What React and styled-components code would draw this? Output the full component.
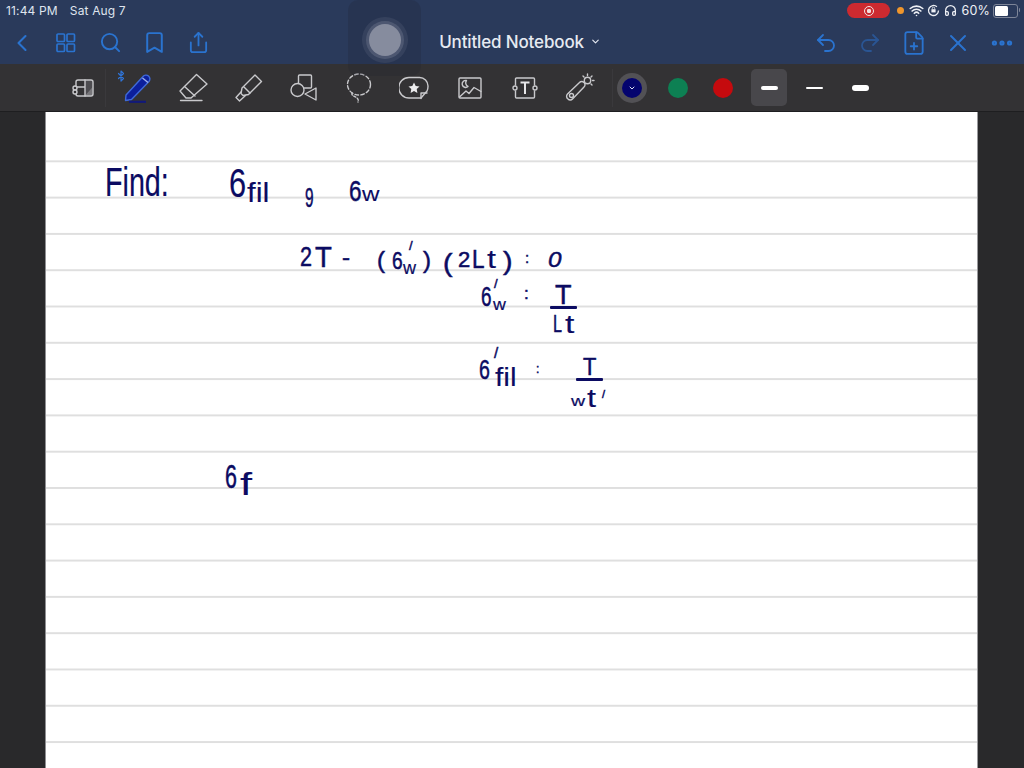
import React from "react";
import styled, { createGlobalStyle } from "styled-components";
import { ChevronLeft, Search, Bookmark, Share, Undo2, Redo2, FilePlus, X, Ellipsis, Wifi, Headphones, ChevronDown, Bluetooth } from "lucide-react";

const Global = createGlobalStyle`
  html, body { margin: 0; padding: 0; background: #29292b; }
  body { font-family: "Liberation Sans", Arial, sans-serif; }
  #root { width: 1024px; height: 768px; overflow: hidden; }
`;

const Screen = styled.div`
  position: relative;
  width: 1024px;
  height: 768px;
  display: flex;
  flex-direction: column;
  overflow: hidden;
  background: #29292b;
`;
const Header = styled.header`
  background: #2a3a5b;
  height: 64px;
  flex: none;
`;
const StatusBar = styled.div`
  height: 21px;
  padding: 0 3px 0 6px;
  display: flex;
  align-items: center;
  justify-content: space-between;
  color: #dfe4ee;
  font-size: 12px;
  font-family: "Inter", "Liberation Sans", sans-serif;
`;
const StatusLeft = styled.div`
  display: flex;
  gap: 12px;
  letter-spacing: 0.15px;
`;
const StatusRight = styled.div`
  display: flex;
  align-items: center;
  height: 100%;
  color: #eef0f5;
`;
const RecordPill = styled.div`
  width: 43px;
  height: 15px;
  border-radius: 8px;
  background: #cd2a30;
  display: flex;
  align-items: center;
  justify-content: center;
  margin-right: 6.5px;
`;
const RecordDot = styled.div`
  width: 10px;
  height: 10px;
  border-radius: 50%;
  box-sizing: border-box;
  background: radial-gradient(circle, #f6dcdc 0 35%, #cd2a30 42%);
  border: 1.5px solid #f3e4e4;
`;
const OrangeDot = styled.div`
  width: 7px;
  height: 7px;
  border-radius: 50%;
  background: #f0962c;
  margin-right: 4.5px;
`;
const StatusIcon = styled.div`
  width: 17px;
  display: flex;
  justify-content: center;
  align-items: center;
`;
const Percent = styled.span`
  margin-left: 2px;
  font-size: 12.5px;
  letter-spacing: 0.2px;
`;
const Battery = styled.div`
  position: relative;
  width: 21px;
  height: 10px;
  margin: 0 3px 0 3px;
  border: 1px solid #7d8598;
  border-radius: 3px;
  padding: 1px;
  display: flex;
  &::after {
    content: "";
    position: absolute;
    right: -3px;
    top: 3px;
    width: 1.5px;
    height: 4px;
    background: #7d8598;
    border-radius: 0 1px 1px 0;
  }
`;
const BatteryFill = styled.div`
  height: 100%;
  background: #fff;
  border-radius: 1.5px;
`;
const NavBar = styled.nav`
  height: 43px;
  display: flex;
  align-items: center;
  justify-content: space-between;
  color: #2a73cf;
`;
const NavGroup = styled.div`
  display: flex;
  width: 220px;
`;
const NavButton = styled.div`
  width: 44px;
  height: 43px;
  display: flex;
  align-items: center;
  justify-content: center;
  color: ${p => p.$dim ? "#2a5593" : "#2a73cf"};
`;
const Title = styled.div`
  margin: -2px 0 0 16px;
  display: flex;
  align-items: center;
  gap: 6px;
  color: #e6eaf2;
  font-size: 17px;
  font-family: "Inter", "Liberation Sans", sans-serif;
  font-weight: 500;
  letter-spacing: -0.15px;
`;
const Toolbar = styled.div`
  height: 47px;
  flex: none;
  display: flex;
  align-items: center;
  background: #333234;
  padding-left: 71px;
  border-bottom: 1px solid #1e1e20;
`;
const LayerSlot = styled.div`
  width: 24px;
  display: flex;
  justify-content: center;
`;
const Divider = styled.div`
  width: 1px;
  height: 38px;
  background: #3a393c;
  margin-left: ${p => p.$ml}px;
  margin-right: ${p => p.$mr}px;
`;
const Tool = styled.div`
  position: relative;
  width: 55.25px;
  height: 46px;
  flex: none;
  display: flex;
  align-items: center;
  justify-content: center;
`;
const BluetoothMark = styled.div`
  position: absolute;
  left: 4px;
  top: 5px;
  color: #2f74d8;
  display: flex;
`;
const ColorRow = styled.div`
  display: flex;
  gap: 15.5px;
  align-items: center;
`;
const Swatch = styled.div`
  width: 30px;
  height: 30px;
  border-radius: 50%;
  display: flex;
  align-items: center;
  justify-content: center;
  background: ${p => p.$ring ? "#525155" : "transparent"};
`;
const SwatchDot = styled.div`
  width: 20px;
  height: 20px;
  border-radius: 50%;
  background: ${p => p.$c};
  display: flex;
  align-items: center;
  justify-content: center;
  color: #dfe2f5;
`;
const WidthRow = styled.div`
  display: flex;
  gap: 9.5px;
  margin-left: 13px;
`;
const WidthBtn = styled.div`
  width: 36px;
  height: 37px;
  border-radius: 5px;
  display: flex;
  align-items: center;
  justify-content: center;
  background: ${p => p.$on ? "#48474b" : "transparent"};
`;
const WidthBar = styled.div`
  width: 17px;
  height: ${p => p.$h}px;
  border-radius: 3px;
  background: #fff;
`;
const Main = styled.main`
  flex: 1;
  padding: 0 47px 0 46px;
  display: flex;
`;
const Page = styled.div`
  position: relative;
  flex: 1;
  background-color: #fff;
  background-image:
    linear-gradient(#fff, #fff),
    linear-gradient(to bottom, transparent calc(100% - 2px), #dfdfdf calc(100% - 2px));
  background-size: 100% 40px, 100% 36.3px;
  background-position: 0 0, 0 14px;
  background-repeat: no-repeat, repeat;
  box-shadow: -1px 0 0 #8f8f92, 1px 0 0 #9a9a9d;
`;
const Ink = styled.span`
  position: absolute;
  left: ${p => p.$x - 46}px;
  top: ${p => p.$b - 112 - p.$s * 0.8465}px;
  font-size: ${p => p.$s}px;
  line-height: 1;
  color: #0b0b62;
  font-family: "Liberation Sans", Arial, sans-serif;
  font-style: ${p => p.$i ? "italic" : "normal"};
  -webkit-text-stroke: ${p => p.$w ?? 0.5}px #0b0b62;
  transform: scaleX(${p => p.$sx || 1});
  transform-origin: 0 0;
  white-space: pre;
`;
const FractionBar = styled.div`
  position: absolute;
  left: ${p => p.$x - 46}px;
  top: ${p => p.$y - 112}px;
  width: ${p => p.$w}px;
  height: 2.5px;
  background: #0b0b62;
  border-radius: 1px;
`;
const Assistive = styled.div`
  position: absolute;
  left: 348px;
  top: 0;
  width: 73px;
  height: 76px;
  border-radius: 10px;
  background: rgba(28, 30, 44, 0.2);
  display: flex;
  align-items: center;
  justify-content: center;
`;
const TouchOuter = styled.div`
  width: 46px;
  height: 46px;
  border-radius: 50%;
  background: rgba(120, 128, 150, 0.18);
  display: flex;
  align-items: center;
  justify-content: center;
  margin-top: 4px;
`;
const TouchMid = styled.div`
  width: 38px;
  height: 38px;
  border-radius: 50%;
  background: rgba(140, 146, 165, 0.28);
  display: flex;
  align-items: center;
  justify-content: center;
`;
const TouchCore = styled.div`
  width: 32px;
  height: 32px;
  border-radius: 50%;
  background: #868c9e;
`;

const line = { fill: "none", stroke: "#c9c9cc", strokeWidth: 1.4, strokeLinecap: "round", strokeLinejoin: "round" };

const GridIcon = () => (
  <svg width="20" height="20" viewBox="0 0 20 20" fill="none" stroke="currentColor" strokeWidth="1.7">
    <rect x="1" y="1" width="7.5" height="7.5" rx="1" /><rect x="11" y="1" width="7.5" height="7.5" rx="1" />
    <rect x="1" y="11" width="7.5" height="7.5" rx="1" /><rect x="11" y="11" width="7.5" height="7.5" rx="1" />
  </svg>
);
const LockRotate = () => (
  <svg width="13" height="13" viewBox="0 0 13 13" fill="none" stroke="#eef0f5">
    <path d="M11.5 6.5a5 5 0 1 1-1.6-3.7" strokeWidth="1.3" /><rect x="4.4" y="5.2" width="4.2" height="3.2" fill="#eef0f5" stroke="none" />
    <path d="M5.3 5.2V4.3a1.2 1.2 0 0 1 2.4 0v.9" strokeWidth=".8" />
  </svg>
);
const LayersIcon = () => (
  <svg width="24" height="22" viewBox="0 0 24 22">
    <path d="M14 3.500h6a1.500 1.500 0 0 1 1.500 1.500v5L14 18.500z" fill="#4d4c50" />
    <path d="M14 18.500 21.500 10v7a1.500 1.500 0 0 1-1.500 1.500z" fill="#77767a" />
    <rect x="5" y="3" width="17" height="16" rx="2" {...line} />
    <path d="M14 3v16M5 10h9" {...line} />
    <circle cx="4" cy="11" r="2" {...line} fill="#333234" /><circle cx="4" cy="15" r="2" {...line} fill="#333234" />
  </svg>
);
const PenIcon = () => (
  <svg width="30" height="30" viewBox="0 0 30 30">
    <path d="M3 22 20 3.500a3.500 3.500 0 0 1 6 5L8.500 26.500l-6 1z" fill="#0c1f9c" stroke="#3f6ad8" strokeWidth="1.400" strokeLinejoin="round" />
    <path d="M19.500 5l5.500 4.500" stroke="#9db1ee" strokeWidth="1.400" />
    <path d="M6 28.800h17" stroke="#11197a" strokeWidth="2.200" />
  </svg>
);
const EraserIcon = () => (
  <svg width="31" height="29" viewBox="0 0 31 29">
    <path d="M2 18 18.500 1.500l10.500 9.500L13 25H8z" {...line} />
    <path d="M6.500 13.500 17 23" {...line} />
    <path d="M2.500 27.500H24" {...line} />
  </svg>
);
const MarkerIcon = () => (
  <svg width="29" height="28" viewBox="0 0 29 28">
    <path d="M8 14 21 1l6.500 6.500L14.500 20.500 9 21.500 7 19.500z" {...line} />
    <path d="M7 18l-5 5.500 3.500 3.500 6-5.500" {...line} />
    <path d="M10 13l6 6" {...line} />
  </svg>
);
const ShapesIcon = () => (
  <svg width="28" height="28" viewBox="0 0 28 28">
    <rect x="8.500" y="1" width="13" height="13" rx="1" {...line} />
    <circle cx="7.500" cy="16" r="6.500" {...line} fill="#333234" />
    <path d="M26 14v12l-11-6z" {...line} />
  </svg>
);
const LassoIcon = () => (
  <svg width="26" height="30" viewBox="0 0 26 30">
    <ellipse cx="13" cy="11.500" rx="11.500" ry="10.500" {...line} strokeDasharray="3.500 2.400" />
    <path d="M6 20c-1 3 3 3 5 5s1 3 1 4" {...line} strokeDasharray="2.200 1.800" />
  </svg>
);
const StickerIcon = () => (
  <svg width="30" height="24" viewBox="0 0 30 24">
    <path d="M10 1.500h10a8.500 8.500 0 0 1 9 9c0 2-.5 3.500-1 4.500l-6 7H10a10 10 0 0 1 0-20.500z" {...line} />
    <path d="M22 22.500v-5.500h6" {...line} />
    <path d="M15 6.500l1.700 3.500 3.800.5-2.800 2.600.7 3.800-3.400-1.900-3.400 1.900.7-3.800-2.800-2.600 3.800-.5z" fill="#ececee" />
  </svg>
);
const ImageIcon = () => (
  <svg width="24" height="22" viewBox="0 0 24 22">
    <rect x="1" y="1" width="22" height="20" rx="1" {...line} />
    <path d="M1.500 20 8 14l3 2.500 5-6 7 4" {...line} />
    <path d="M8.500 3.500a3.500 3.500 0 1 0 1.500 6 4 4 0 0 1-1.500-6z" {...line} />
  </svg>
);
const TextIcon = () => (
  <svg width="26" height="22" viewBox="0 0 26 22">
    <path d="M3.500 8V2a1 1 0 0 1 1-1h17a1 1 0 0 1 1 1v6M3.500 14v6a1 1 0 0 0 1 1h17a1 1 0 0 0 1-1v-6" {...line} />
    <circle cx="3" cy="11" r="2" {...line} /><circle cx="23" cy="11" r="2" {...line} />
    <path d="M8.500 5.500h9M13 5.500V17" fill="none" stroke="#e6e6e8" strokeWidth="2" />
  </svg>
);
const LaserIcon = () => (
  <svg width="30" height="30" viewBox="0 0 30 30">
    <path d="M2.500 21 14.500 9.500a3 3 0 0 1 4.500 0 3 3 0 0 1 0 4.500L7.500 26a3 3 0 0 1-4.500 0 3.300 3.300 0 0 1-.5-5z" {...line} />
    <circle cx="6.500" cy="22.500" r="2" {...line} />
    <circle cx="22.500" cy="7.500" r="3.200" {...line} />
    <path d="M22.500 1v1.500M29 7.500h-1.500M27 3l-1 1M27 12l-1-1M18 3l1 1" {...line} />
  </svg>
);

const tools = [EraserIcon, MarkerIcon, ShapesIcon, LassoIcon, StickerIcon, ImageIcon, TextIcon, LaserIcon];

const strokes = [
  ["Find:", 105, 197, 41, 0.7, false, 0.2],
  ["6", 229, 197, 40, 0.77, false, 0.2],
  ["fil", 247, 203, 27, 1.15, false, 0.1],
  ["9", 305, 208, 28, 0.55],
  ["6", 349, 201, 30, 0.75],
  ["w", 362, 201, 21, 1.15, false, 0.1],
  ["2", 300, 267, 27, 0.8],
  ["T", 315, 268, 29, 0.95],
  ["-", 342, 266, 22, 1.1],
  ["(", 377, 268, 24, 1],
  ["6", 392, 269, 24, 0.8],
  ["/", 409, 250, 13, 1],
  ["w", 403, 274, 19, 0.95, false, 0.2],
  [")", 423, 268, 24, 1],
  ["(", 443, 272, 26, 1.1],
  ["2", 458, 268, 22, 1],
  ["L", 472, 268, 25, 0.9],
  ["t", 487, 268, 26, 1.25, false, 0.1],
  [")", 503, 270, 26, 1.1],
  [":", 525, 263, 15, 1],
  ["0", 548, 268, 22, 1.1, true],
  ["6", 481, 307, 27, 0.7],
  ["/", 494, 288, 13, 1],
  ["w", 493, 310, 17, 1.05, false, 0.2],
  [":", 524, 299, 17, 1],
  ["T", 555, 305, 27, 1],
  ["L", 553, 332, 23, 0.7],
  ["t", 565, 333, 25, 1.35, false, 0.1],
  ["6", 479, 380, 28, 0.7],
  ["/", 494, 358, 15, 1],
  ["fil", 495, 386, 25, 1.2, false, 0.1],
  [":", 536, 373, 12, 1],
  ["T", 583, 375, 23, 0.95],
  ["w", 571, 406, 15, 1.3, false, 0.2],
  ["t", 587, 407, 25, 1.3, false, 0.1],
  ["/", 602, 398, 11, 1],
  ["6", 225, 488, 33, 0.65],
  ["f", 240, 495, 31, 1.4, false, 0.1],
];

export default function App() {
  return (
    <Screen>
      <Global />
      <Header>
        <StatusBar>
          <StatusLeft><span>11:44 PM</span><span>Sat Aug 7</span></StatusLeft>
          <StatusRight>
            <RecordPill><RecordDot /></RecordPill>
            <OrangeDot />
            <StatusIcon><Wifi size={15} strokeWidth={2.6} /></StatusIcon>
            <StatusIcon><LockRotate /></StatusIcon>
            <StatusIcon><Headphones size={13} strokeWidth={2.4} /></StatusIcon>
            <Percent>60%</Percent>
            <Battery><BatteryFill style={{ width: "60%" }} /></Battery>
          </StatusRight>
        </StatusBar>
        <NavBar>
          <NavGroup>
            <NavButton><ChevronLeft size={28} strokeWidth={1.8} /></NavButton>
            <NavButton><GridIcon /></NavButton>
            <NavButton><Search size={23} strokeWidth={2} /></NavButton>
            <NavButton><Bookmark size={25} strokeWidth={1.9} /></NavButton>
            <NavButton><Share size={23} strokeWidth={1.9} /></NavButton>
          </NavGroup>
          <Title>Untitled Notebook<ChevronDown size={11} strokeWidth={2.5} /></Title>
          <NavGroup>
            <NavButton><Undo2 size={24} strokeWidth={1.8} /></NavButton>
            <NavButton $dim><Redo2 size={24} strokeWidth={1.8} /></NavButton>
            <NavButton><FilePlus size={26} strokeWidth={1.7} /></NavButton>
            <NavButton><X size={28} strokeWidth={1.7} /></NavButton>
            <NavButton><Ellipsis size={26} strokeWidth={2.8} /></NavButton>
          </NavGroup>
        </NavBar>
      </Header>
      <Toolbar>
        <LayerSlot><LayersIcon /></LayerSlot>
        <Divider $ml={10} $mr={4.5} />
        <Tool>
          <BluetoothMark><Bluetooth size={12} strokeWidth={2.4} /></BluetoothMark>
          <PenIcon />
        </Tool>
        {tools.map((Icon, i) => <Tool key={i}><Icon /></Tool>)}
        <Divider $ml={4.5} $mr={4} />
        <ColorRow>
          <Swatch $ring><SwatchDot $c="#04046e"><ChevronDown size={8} strokeWidth={3} /></SwatchDot></Swatch>
          <Swatch><SwatchDot $c="#0d8053" /></Swatch>
          <Swatch><SwatchDot $c="#c50a0e" /></Swatch>
        </ColorRow>
        <WidthRow>
          <WidthBtn $on><WidthBar $h={4} /></WidthBtn>
          <WidthBtn><WidthBar $h={2} /></WidthBtn>
          <WidthBtn><WidthBar $h={6} /></WidthBtn>
        </WidthRow>
      </Toolbar>
      <Main>
        <Page>
          {strokes.map(([t, x, b, s, sx, i, w], k) => (
            <Ink key={k} $x={x} $b={b} $s={s} $sx={sx} $i={i} $w={w}>{t}</Ink>
          ))}
          <FractionBar $x={550} $y={306} $w={27} />
          <FractionBar $x={576} $y={378} $w={27} />
        </Page>
      </Main>
      <Assistive>
        <TouchOuter><TouchMid><TouchCore /></TouchMid></TouchOuter>
      </Assistive>
    </Screen>
  );
}
